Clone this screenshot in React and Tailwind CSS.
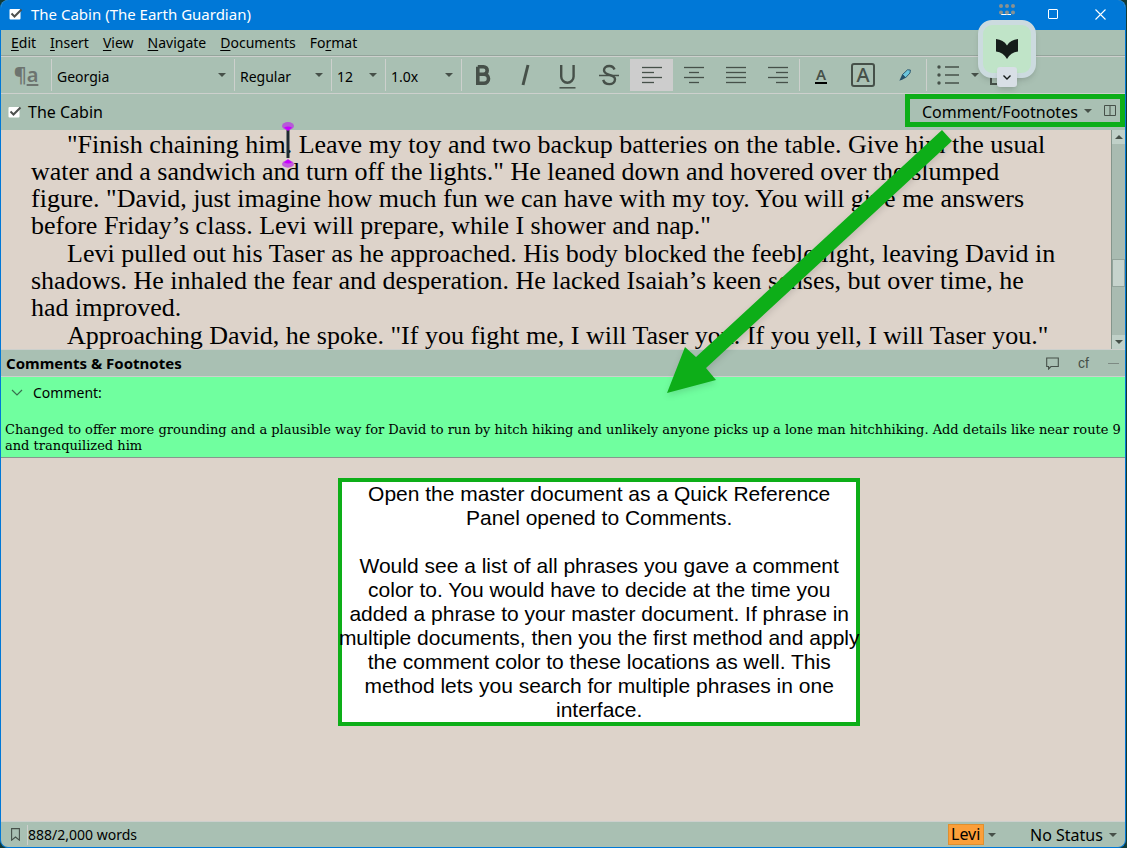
import React from "react";

function Caret({ className = "" }) {
  return (
    <svg viewBox="0 0 8 4" className={`h-1 w-2 shrink-0 ${className}`} fill="#465049" aria-hidden="true">
      <path d="M0 0h8L4 4z" />
    </svg>
  );
}

function Check({ className = "" }) {
  return (
    <svg viewBox="0 0 14 12" className={className} aria-hidden="true">
      <rect x="0.5" y="1" width="11" height="10.5" rx="1" fill="#fff" />
      <path d="M2.5 5.5l3 3L12.5 1.5" fill="none" stroke="#4d504e" strokeWidth="2" />
    </svg>
  );
}

function Picker({ label, options, className = "", selectClass = "bg-transparent", caretClass = "right-2" }) {
  return (
    <span className={`relative flex items-center ${className}`}>
      <select aria-label={label} className={`w-full cursor-default appearance-none outline-none ${selectClass}`}>
        {options.map((o) => (
          <option key={o}>{o}</option>
        ))}
      </select>
      <Caret className={`pointer-events-none absolute ${caretClass}`} />
    </span>
  );
}

function Tool({ label, active, children }) {
  return (
    <button
      type="button"
      aria-label={label}
      className={`flex h-8 shrink-0 items-center justify-center ${active ? "w-[43px] bg-[#cdcdcd]" : "w-[42px]"}`}
    >
      {children}
    </button>
  );
}

function Divider() {
  return <span className="h-8 w-px shrink-0 bg-[#cdd0cd]" />;
}

function AlignIcon({ lines }) {
  return (
    <svg viewBox="0 0 20 18" className="h-[18px] w-5" stroke="#465049" strokeWidth="1.3" aria-hidden="true">
      {lines.map(([a, b], i) => (
        <path key={i} d={`M${a} ${1.5 + i * 5}H${b}`} />
      ))}
    </svg>
  );
}

const menus = [
  ["", "E", "dit"],
  ["", "I", "nsert"],
  ["", "V", "iew"],
  ["", "N", "avigate"],
  ["", "D", "ocuments"],
  ["Fo", "r", "mat"],
];

const paragraphs = [
  [
    "\"Finish chaining him. Leave my toy and two backup batteries on the table. Give him the usual",
    "water and a sandwich and turn off the lights.\" He leaned down and hovered over the slumped",
    "figure. \"David, just imagine how much fun we can have with my toy. You will give me answers",
    "before Friday’s class. Levi will prepare, while I shower and nap.\"",
  ],
  [
    "Levi pulled out his Taser as he approached. His body blocked the feeble light, leaving David in",
    "shadows. He inhaled the fear and desperation. He lacked Isaiah’s keen senses, but over time, he",
    "had improved.",
  ],
  ["Approaching David, he spoke. \"If you fight me, I will Taser you. If you yell, I will Taser you.\""],
];

function Lines({ lines }) {
  return lines.map((line, i) => (
    <React.Fragment key={i}>
      {i > 0 && <br />}
      {line}
    </React.Fragment>
  ));
}

function TitleBar() {
  return (
    <header className="flex h-[30px] shrink-0 items-center bg-[#0078d7] pb-0.5 pl-2 text-white">
      <Check className="mr-2 h-3 w-3.5" />
      <h1 className="grow text-[15px] leading-5">The Cabin (The Earth Guardian)</h1>
      <button type="button" aria-label="Minimize" className="flex h-full w-[46px] items-center justify-center">
        <span className="h-px w-2.5 bg-white" />
      </button>
      <button type="button" aria-label="Maximize" className="flex h-full w-[47px] items-center justify-center">
        <span className="h-2.5 w-2.5 rounded-[1px] border border-white" />
      </button>
      <button type="button" aria-label="Close" className="flex h-full w-[49px] items-center justify-center">
        <svg viewBox="0 0 11 11" className="h-[11px] w-[11px]" stroke="#fff" strokeWidth="1.1" aria-hidden="true">
          <path d="M.5.5l10 10M10.5.5l-10 10" />
        </svg>
      </button>
    </header>
  );
}

function Toolbar() {
  const pick = "bg-transparent pl-[5px] pt-[3px]";
  return (
    <div className="flex h-[37px] shrink-0 items-center overflow-hidden border-b border-[#cdd0cd]">
      <button type="button" aria-label="Styles" className="flex h-8 w-[50px] shrink-0 items-center justify-center">
        <span className="text-[20px] font-semibold leading-6 text-[#6d746f]">
          ¶<span className="underline underline-offset-2">a</span>
        </span>
      </button>
      <Divider />
      <Picker label="Font" options={["Georgia"]} className="w-[182px] shrink-0" selectClass={pick} />
      <Divider />
      <Picker label="Typeface" options={["Regular"]} className="w-24 shrink-0" selectClass={pick} />
      <Divider />
      <Picker label="Size" options={["12"]} className="w-[53px] shrink-0" selectClass={pick} />
      <Divider />
      <Picker label="Line spacing" options={["1.0x"]} className="w-[75px] shrink-0" selectClass={pick} />
      <Divider />
      <Tool label="Bold">
        <svg viewBox="0 0 18 22" className="h-[22px] w-[18px]" fill="none" stroke="#465049" strokeWidth="3.6" aria-hidden="true">
          <path d="M3.8 2.8V19.2H10a4.5 4.5 0 0 0 0-9H3.8M9.500 10.2a3.700 3.700 0 0 0 0-7.400H3.8" />
        </svg>
      </Tool>
      <Tool label="Italic">
        <svg viewBox="0 0 12 22" className="h-[22px] w-3" stroke="#465049" strokeWidth="3" aria-hidden="true">
          <path d="M9 1L4 21" />
        </svg>
      </Tool>
      <Tool label="Underline">
        <svg viewBox="0 0 18 26" className="mt-1 h-[26px] w-[18px]" fill="none" stroke="#465049" strokeWidth="2.4" aria-hidden="true">
          <path d="M3.200 1v11.500a6.200 6.200 0 0 0 12.400 0V1" />
          <path d="M1.500 23.800h16" strokeWidth="1.500" />
        </svg>
      </Tool>
      <Tool label="Strikethrough">
        <svg viewBox="0 0 20 22" className="h-[22px] w-5" fill="none" stroke="#465049" strokeWidth="2.4" aria-hidden="true">
          <path d="M15.500 5.500C14.500 2.800 12.500 2 10.300 2 7.200 2 5 3.700 5 6.300c0 6 11 3 11 9 0 3-2.500 4.800-5.600 4.800-3.300 0-5.400-1.500-6.200-4.300" />
          <path d="M0 11.500h20" strokeWidth="1.500" />
        </svg>
      </Tool>
      <Tool label="Align left" active>
        <AlignIcon lines={[[0, 20], [0, 12], [0, 20], [0, 12]]} />
      </Tool>
      <Tool label="Align center">
        <AlignIcon lines={[[0, 20], [5, 15], [0, 20], [5, 15]]} />
      </Tool>
      <Tool label="Justify">
        <AlignIcon lines={[[0, 20], [0, 20], [0, 20], [0, 20]]} />
      </Tool>
      <Tool label="Align right">
        <AlignIcon lines={[[0, 20], [8, 20], [0, 20], [8, 20]]} />
      </Tool>
      <Divider />
      <Tool label="Text color">
        <span className="border-b-2 border-black px-[1px] text-[15px] font-semibold leading-4 text-[#465049]">A</span>
      </Tool>
      <Tool label="Text background">
        <span className="flex h-6 w-6 items-center justify-center rounded-[3px] border-2 border-[#465049] text-[20px] font-medium leading-5 text-[#465049]">
          A
        </span>
      </Tool>
      <Tool label="Highlight">
        <svg viewBox="0 0 12 12" className="h-3 w-3" aria-hidden="true">
          <path d="M3.500 5.500L8.500.8 11.400 1l-.4 3L6.500 8.800z" fill="#6cc5dc" stroke="#25506a" strokeWidth=".9" />
          <path d="M3.300 5.200l3.500 3.500L4 10.200.4 11.700 2 8z" fill="#25506a" />
        </svg>
      </Tool>
      <Divider />
      <Tool label="List">
        <svg viewBox="0 0 22 20" className="h-5 w-[22px]" fill="#465049" aria-hidden="true">
          <circle cx="2" cy="2" r="1.700" />
          <circle cx="2" cy="10" r="1.700" />
          <circle cx="2" cy="18" r="1.700" />
          <path d="M8 1.300h14v1.400H8zM8 9.300h14v1.400H8zM8 17.300h14v1.400H8z" />
        </svg>
      </Tool>
      <button type="button" aria-label="List options" className="flex h-8 w-3 items-center justify-center">
        <Caret />
      </button>
      <Tool label="Insert">
        <span className="mr-2 mt-1 h-4 w-4 border-2 border-[#465049]" />
      </Tool>
    </div>
  );
}

function Assistant() {
  return (
    <div className="absolute right-[89px] top-[3px] flex w-[58px] flex-col items-center">
      <svg viewBox="0 0 16 12" className="h-3 w-4" fill="#8a9290" aria-hidden="true">
        {[2, 8, 14].map((x) => (
          <React.Fragment key={x}>
            <circle cx={x} cy="3" r="2" />
            <circle cx={x} cy="9.500" r="2" />
          </React.Fragment>
        ))}
      </svg>
      <button
        type="button"
        aria-label="Open assistant"
        className="mt-[5px] flex h-[58px] w-full items-center justify-center rounded-[14px] border-[5px] border-[#ccdbdf] bg-[#c0e4c8] shadow-md"
      >
        <svg viewBox="0 0 22 20" className="h-5 w-[22px]" fill="#151c1a" aria-hidden="true">
          <path d="M0 0c5 .5 8.500 2.500 11 6.500 2.500-4 6-6 11-6.500v12.500c-5 .5-8.500 3-11 7.500-2.500-4.500-6-7-11-7.500z" />
        </svg>
      </button>
      <button
        type="button"
        aria-label="Expand assistant"
        className="-mt-[11px] flex h-5 w-5 items-center justify-center rounded-[3px] bg-[#d8dfe6] shadow-md"
      >
        <svg viewBox="0 0 8 5" className="h-[5px] w-2" fill="none" stroke="#151c1a" strokeWidth="1.400" aria-hidden="true">
          <path d="M.5.5L4 4 7.500.5" />
        </svg>
      </button>
    </div>
  );
}

function ArrowOverlay() {
  return (
    <svg
      viewBox="660 125 300 275"
      className="pointer-events-none absolute right-[165px] top-[125px] h-[275px] w-[300px] drop-shadow-md"
      fill="#0dae18"
      aria-hidden="true"
    >
      <path d="M942 130L952 141L706 368L716 380L667 393L685 347L696 357z" />
    </svg>
  );
}

export default function App() {
  return (
    <div className="min-h-screen bg-[#123a35] pr-px font-['Noto_Sans',sans-serif] text-[14px] text-black">
      <div className="relative flex min-h-screen flex-col overflow-hidden rounded-lg border-x border-b border-[#0078d7] bg-[#a9c0b3]">
        <TitleBar />
        <nav className="flex h-[26px] shrink-0 items-center gap-3.5 border-b border-[#94a59c] pl-2.5">
          {menus.map(([pre, key, post]) => (
            <button key={key} type="button" className="leading-5">
              {pre}
              <span className="underline underline-offset-2">{key}</span>
              {post}
            </button>
          ))}
        </nav>
        <div className="h-px shrink-0 bg-[#cdd0cd]" />
        <Toolbar />

        <div className="flex h-9 shrink-0 items-start justify-between">
          <label className="relative flex items-center gap-[5px] pl-2 pt-1.5 text-[16px] leading-6">
            <input type="checkbox" defaultChecked className="h-3 w-3.5 appearance-none" />
            <Check className="pointer-events-none absolute left-[7px] h-3 w-3.5" />
            The Cabin
          </label>
          <div className="flex h-[33px] items-center gap-3 border-[5px] border-[#0dae18] pl-3 pr-1">
            <Picker
              label="Panel"
              options={["Comment/Footnotes"]}
              className="text-[16px]"
              selectClass="bg-transparent pr-3.5 pt-0.5"
              caretClass="right-0"
            />
            <button type="button" aria-label="Split view">
              <svg viewBox="0 0 12 11" className="h-[11px] w-3" fill="none" stroke="#465049" aria-hidden="true">
                <path d="M.5.5h11v10H.5zM6 .5v10" />
              </svg>
            </button>
          </div>
        </div>

        <main className="flex shrink-0 bg-[#ddd3ca]">
          <article className="grow whitespace-nowrap pl-[30px] pt-px font-['Liberation_Serif',serif] text-[26px] leading-[27px]">
            {paragraphs.map((lines, i) => (
              <p key={i} className="mb-px indent-9 last:mb-0">
                {i === 0 ? (
                  <>
                    {lines[0].slice(0, 20)}
                    <span className="relative">
                      <svg
                        viewBox="0 0 12 46"
                        className="absolute -left-1 -top-2 h-[46px] w-3"
                        aria-hidden="true"
                      >
                        <path d="M4.500 8h3v28h-3z" fill="#1d2a30" />
                        <ellipse cx="6" cy="4" rx="6" ry="4" fill="#b65ad8" />
                        <path d="M2 5.500q4-2 8 0L6 9z" fill="#c800ff" />
                        <ellipse cx="6" cy="42" rx="6" ry="3.700" fill="#c45ae0" />
                        <path d="M2 40.500q4 2 8 0L6 37z" fill="#c800ff" />
                      </svg>
                    </span>
                    <Lines lines={[lines[0].slice(20), ...lines.slice(1)]} />
                  </>
                ) : (
                  <Lines lines={lines} />
                )}
              </p>
            ))}
          </article>
          <div className="flex w-3.5 shrink-0 flex-col items-center border-l border-[#84958c] bg-[#a9bbb1]">
            <button type="button" aria-label="Scroll up" className="flex h-3.5 w-full items-center justify-center bg-[#c0d0c8]">
              <Caret className="rotate-180" />
            </button>
            <span className="grow" />
            <span className="mb-12 h-7 w-full border border-[#93a49b] bg-[#c6d3cc]" />
            <button type="button" aria-label="Scroll down" className="flex h-3.5 w-full items-center justify-center bg-[#c0d0c8]">
              <Caret />
            </button>
          </div>
        </main>

        <section className="flex grow flex-col">
          <div className="flex h-7 shrink-0 items-center border-y border-[#cdd0cd] pl-[5px] pr-1.5">
            <h2 className="grow text-[15px] font-bold leading-5">Comments &amp; Footnotes</h2>
            <button type="button" aria-label="Add comment" className="mr-[19px]">
              <svg viewBox="0 0 13 13" className="h-[13px] w-[13px]" fill="none" stroke="#465049" strokeWidth="1.100" aria-hidden="true">
                <path d="M.7 1h11.600v8.500H5L2.600 12V9.500H.7z" />
              </svg>
            </button>
            <button type="button" aria-label="Add footnote" className="mr-[19px] font-['Liberation_Sans',sans-serif] text-[14px] leading-5 text-[#465049]">
              cf
            </button>
            <button type="button" aria-label="Collapse" className="flex h-5 items-center">
              <span className="h-px w-[11px] bg-[#7d8a83]" />
            </button>
          </div>

          <div className="shrink-0 border-b border-[#87978e] bg-[#70ff9f] pb-[3px] pl-1">
            <button type="button" className="flex h-[31px] items-center gap-2.5 pl-1.5">
              <svg viewBox="0 0 12 7" className="h-[7px] w-3" fill="none" stroke="#39704e" strokeWidth="1.200" aria-hidden="true">
                <path d="M1 1l5 5 5-5" />
              </svg>
              Comment:
            </button>
            <p className="mt-3.5 whitespace-nowrap font-['DejaVu_Serif',serif] text-[13px] leading-4">
              Changed to offer more grounding and a plausible way for David to run by hitch hiking and unlikely anyone picks up a lone man hitchhiking. Add details like near route 9
              <br />
              and tranquilized him
            </p>
          </div>

          <div className="flex grow items-start bg-[#ddd3ca] pt-5">
            <div className="ml-[30%] flex w-[522px] flex-col items-center whitespace-nowrap border-4 border-[#0dae18] bg-white text-center font-['Liberation_Sans',sans-serif] text-[21px] leading-6">
              <p>
                Open the master document as a Quick Reference
                <br />
                Panel opened to Comments.
              </p>
              <p className="mt-6">
                Would see a list of all phrases you gave a comment
                <br />
                color to. You would have to decide at the time you
                <br />
                added a phrase to your master document. If phrase in
                <br />
                multiple documents, then you the first method and apply
                <br />
                the comment color to these locations as well. This
                <br />
                method lets you search for multiple phrases in one
                <br />
                interface.
              </p>
            </div>
          </div>
        </section>

        <footer className="flex h-[26px] shrink-0 items-center border-t border-[#cdd0cd] pl-2.5 pr-2">
          <button type="button" aria-label="Bookmark">
            <svg viewBox="0 0 9 13" className="h-[13px] w-[9px]" fill="none" stroke="#465049" strokeWidth="1.100" aria-hidden="true">
              <path d="M.6.6h7.800v11.600L4.500 9 .6 12.200z" />
            </svg>
          </button>
          <span className="ml-[7px] h-5 w-px bg-[#cdd0cd]" />
          <span className="grow">888/2,000 words</span>
          <Picker
            label="Label"
            options={["Levi"]}
            className="mr-[34px] pr-3 text-[16px]"
            selectClass="h-[21px] border border-[#e08f2e] bg-[#fb9f3a] px-0.5 leading-[19px]"
            caretClass="right-0"
          />
          <Picker
            label="Status"
            options={["No Status"]}
            className="text-[16px]"
            selectClass="bg-transparent pr-3.5"
            caretClass="right-0"
          />
        </footer>

        <Assistant />
        <ArrowOverlay />
      </div>
    </div>
  );
}
